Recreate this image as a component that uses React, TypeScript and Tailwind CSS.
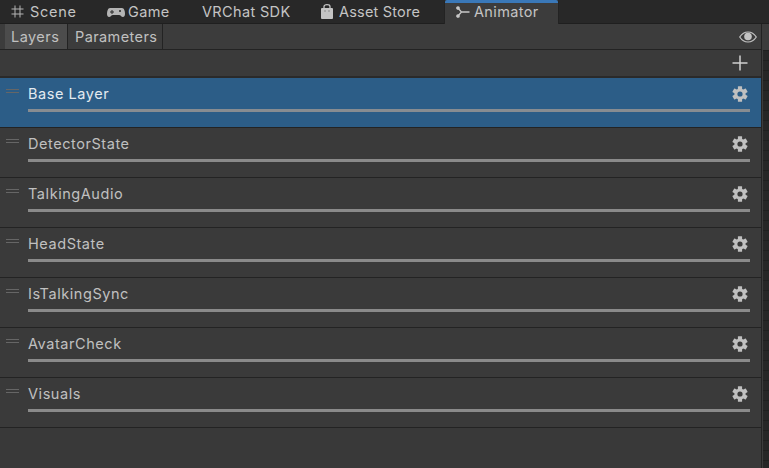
import React from "react";

function Grip() {
  return (
    <div className="absolute left-[6px] top-[11px] flex w-[13px] flex-col gap-[2px]">
      <div className="h-px bg-[#666666]" />
      <div className="h-px bg-[#666666]" />
    </div>
  );
}

function Gear() {
  return (
    <svg width="16" height="16" viewBox="0 0 16 16" className="block">
      <g fill="#c0c0c0">
        {[0, 60, 120].map((a) => (
          <rect key={a} x="5.900" y="0.300" width="4.200" height="15.400" rx="0.500" transform={`rotate(${a} 8 8)`} />
        ))}
      </g>
      <circle cx="8" cy="8" r="4.500" fill="none" stroke="#c0c0c0" strokeWidth="2.200" />
      <circle cx="8" cy="8" r="2.600" fill="var(--hole)" />
    </svg>
  );
}

function Layer({ name, selected }: { name: string; selected?: boolean }) {
  return (
    <div className={`relative h-[49px] shrink-0 ${selected ? "bg-[#2c5d87] [--hole:#2c5d87]" : "bg-[#3a3a3a] [--hole:#3a3a3a]"}`}>
      <Grip />
      <div className={`absolute left-[28px] top-[6px] text-[14.5px] leading-[20px] tracking-[0.56px] ${selected ? "text-[#e4eaf0]" : "text-[#c0c0c0]"}`}>
        {name}
      </div>
      <div className={`absolute left-[28px] right-[11px] top-[31px] h-[3px] ${selected ? "bg-[#878c91]" : "bg-[#8a8a8a]"}`} />
      <div className="absolute right-[13px] top-[8px]">
        <Gear />
      </div>
    </div>
  );
}

function Tab({ icon, label, className }: { icon?: React.ReactNode; label: string; className: string }) {
  return (
    <div className={`flex h-full items-center ${className}`}>
      {icon}
      <span>{label}</span>
    </div>
  );
}

const layers = ["DetectorState", "TalkingAudio", "HeadState", "IsTalkingSync", "AvatarCheck", "Visuals"];

export default function App() {
  return (
    <div className="flex h-[468px] w-[769px] flex-col overflow-hidden bg-[#393939] text-[14.5px] tracking-[0.35px] text-[#c4c4c4]" style={{ fontFamily: "Inter, sans-serif" }}>
      <div className="flex h-[24px] shrink-0 border-b border-[#1f1f1f] bg-[#282828]">
        <Tab
          className="ml-[11px] w-[96px] tracking-[0.7px]"
          label="Scene"
          icon={
            <svg width="13" height="13" viewBox="0 0 13 13" className="mr-[6px]" stroke="#b4b4b4" fill="none">
              <path d="M4 .5v12M9 .5v12M.5 4h12M.5 9h12" />
            </svg>
          }
        />
        <Tab
          className="w-[95px]"
          label="Game"
          icon={
            <svg width="18" height="10" viewBox="0 0 18 10" className="mr-[3px]">
              <path fill="#b4b4b4" d="M3 1h12c2 0 3 3 3 6 0 2-1 3-2 3-2 0-2-2-4-2H6c-2 0-2 2-4 2-1 0-2-1-2-3 0-3 1-6 3-6z" />
              <path stroke="#282828" d="M3 5h4M5 3v4" />
              <circle cx="13" cy="4" r="1" fill="#282828" />
            </svg>
          }
        />
        <Tab className="w-[119px]" label="VRChat SDK" />
        <Tab
          className="w-[123px] tracking-[0.2px]"
          label="Asset Store"
          icon={
            <svg width="12" height="15" viewBox="0 0 12 15" className="mr-[6px]">
              <path fill="#c4c4c4" d="M1 4h10a1 1 0 0 1 1 1v9a1 1 0 0 1-1 1H1a1 1 0 0 1-1-1V5a1 1 0 0 1 1-1z" />
              <path fill="none" stroke="#c4c4c4" strokeWidth="1.300" d="M3 4V2.500c0-1 1-1.800 3-1.800s3 .8 3 1.800V4" />
              <path stroke="#8a8a8a" d="M3 7h2M7 7h2" />
            </svg>
          }
        />
        <div className="relative -mb-px flex h-[24px] w-[115px] items-center rounded-t-[2px] border-x border-[#232323] bg-[#3c3c3c] pl-[11px]">
          <div className="absolute inset-x-0 top-0 h-[3px] rounded-t-[2px] bg-[#3a78b8]" />
          <svg width="14" height="12" viewBox="0 0 14 12" className="mr-[4px]" fill="none" stroke="#c8c8c8" strokeWidth="1.300">
            <path d="M1.500 1.500 5.500 6 1.500 10.500M5.500 6h8" />
            <circle cx="2" cy="2" r="1.200" fill="#c8c8c8" />
            <circle cx="2" cy="10" r="1.200" fill="#c8c8c8" />
          </svg>
          <span>Animator</span>
        </div>
      </div>

      <div className="flex h-[26px] shrink-0 bg-[#3c3c3c]">
        <div className="flex w-[761px] items-stretch border-b border-[#232323] pl-[5px]">
          <div className="flex w-[63px] items-center border-r border-[#232323] bg-[#4c4c4c] pl-[6px] tracking-[0.45px] text-[#c0c0c0]">Layers</div>
          <div className="flex w-[95px] items-center border-r border-[#232323] pl-[7px] tracking-[0.4px] text-[#c0c0c0]">Parameters</div>
          <div className="flex-1" />
          <svg width="18" height="12" viewBox="0 0 18 12" className="mr-[4px] self-center" fill="none">
            <path d="M.7 6C3 2.500 6 1 9 1s6 1.500 8.300 5C15 9.500 12 11 9 11S3 9.500.7 6z" stroke="#c4c4c4" strokeWidth="1.200" />
            <circle cx="9" cy="5.500" r="3.800" fill="#c4c4c4" />
          </svg>
        </div>
        <div className="w-px shrink-0 bg-[#232323]" />
      </div>

      <div className="flex min-h-0 flex-1">
        <div className="flex w-[761px] flex-col">
          <div className="flex h-[26px] shrink-0 items-center justify-end bg-[#3a3a3a] pr-[13px]">
            <svg width="16" height="16" viewBox="0 0 16 16" stroke="#d0d0d0" strokeWidth="1.500">
              <path d="M8 0.500v15M.5 8h15" />
            </svg>
          </div>
          <div className="h-[2px] shrink-0 bg-[#2a2a2a]" />
          <Layer name="Base Layer" selected />
          {layers.map((n) => (
            <React.Fragment key={n}>
              <div className="h-px shrink-0 bg-[#232323]" />
              <Layer name={n} />
            </React.Fragment>
          ))}
          <div className="h-px shrink-0 bg-[#232323]" />
          <div className="flex-1" />
        </div>
        <div className="w-px shrink-0 bg-[#232323]" />
        <div className="w-[1px] shrink-0 bg-[#3c3c3c]" />
        <div className="flex-1 bg-[#262626] bg-[repeating-linear-gradient(to_bottom,#1f1f1f_0,#1f1f1f_1px,transparent_1px,transparent_10px)]" />
      </div>
    </div>
  );
}
